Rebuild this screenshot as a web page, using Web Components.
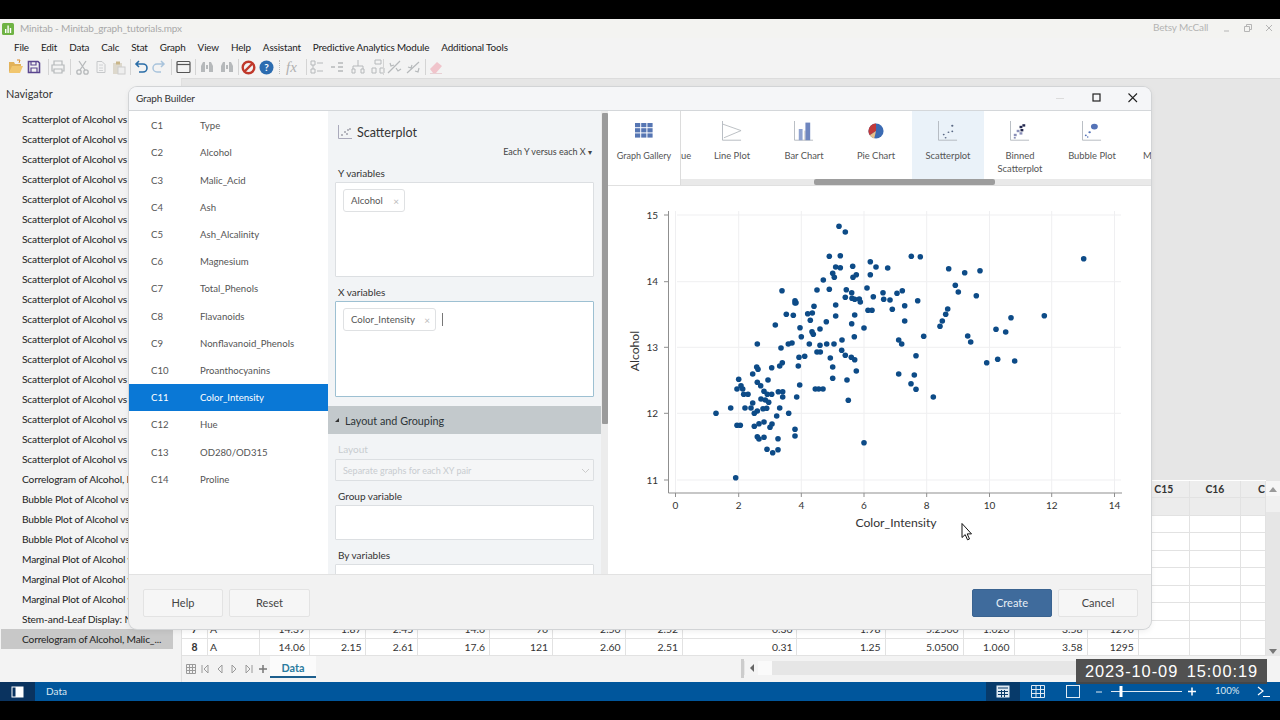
<!DOCTYPE html>
<html><head><meta charset="utf-8"><title>Minitab</title>
<style>
html,body{margin:0;padding:0;background:#000;height:720px;overflow:hidden;font-family:Lato,"Open Sans",sans-serif}
#app{position:relative;width:1280px;height:720px;display:flex;flex-direction:column;padding-top:19px;box-sizing:border-box}
#main{display:flex;height:604px}
#work{flex:1;display:flex;flex-direction:column;min-width:0}
.fill{flex:1;background:#e6e6e6;border-top:1px solid #dcdcdc}
</style></head><body>
<div id="app">
<mt-title></mt-title><mt-menu></mt-menu><mt-toolbar></mt-toolbar>
<div id="main"><mt-navigator></mt-navigator><div id="work"><div class="fill"></div><mt-sheet></mt-sheet><mt-tabbar></mt-tabbar></div></div>
<mt-status></mt-status>
<mt-dialog></mt-dialog>
<mt-stamp>2023-10-09 15:00:19</mt-stamp>
</div>
<template id="dialog-tpl">
<style>
:host{position:absolute;left:129px;top:87px;width:1022px;height:542px;display:flex;flex-direction:column;background:#f2f2f2;border-radius:8px;box-shadow:0 0 0 1px #d2d4d6,0 2px 6px rgba(0,0,0,.08);overflow:hidden;font-size:10px;color:#444}
.bar{height:24px;flex:none;display:flex;align-items:center;padding:0 0 2px 7px;background:#f5f6f8;border-bottom:1px solid #d4d7da;font-size:10px;letter-spacing:-.15px;color:#333;position:relative;box-sizing:border-box}
.bar svg{position:absolute;top:5px}
.body{flex:1;display:flex;min-height:0}
.foot{height:55px;flex:none;border-top:1px solid #e2e2e2;display:flex;align-items:center;padding:1px 13px 0 14px;gap:6px;box-sizing:border-box}
.sp{flex:1}
.mid{width:280px;flex:none;position:relative;overflow:hidden;background:#f2f4f6;display:flex}
.col{width:273px;flex:none;padding:10px 0 0;overflow:hidden;box-sizing:border-box}
.sb{width:7px;background:#ececec;position:relative;flex:none}
.sb i{position:absolute;left:1px;right:0;top:2px;height:311px;background:#9b9b9b;border-radius:1px}
.head{height:22px;display:flex;align-items:center;gap:5px;padding-left:10px;font-size:12.5px;color:#333}
.sub{height:14px;margin:2px 0 6px;text-align:right;padding-right:9px;font-size:9px;line-height:14px;color:#444;white-space:nowrap}
.sub span{font-size:8px}
.sec{height:28px;margin:9px 0 7px;background:#c3c9cc;display:flex;align-items:center;padding-left:7px;gap:6px;font-size:10.8px;color:#2d3438}
.sec i{width:0;height:0;border-left:4px solid transparent;border-bottom:4px solid #333}
.right{flex:1;min-width:0;background:#fff;display:flex;flex-direction:column}
</style>
<div class="bar">Graph Builder
<svg style="left:925px" width="12" height="12"><path d="M2 6.5H10" stroke="#dcdcdc"/></svg>
<svg style="left:962px" width="12" height="12"><rect x="2" y="2" width="7" height="7" fill="none" stroke="#222" stroke-width="1.2"/></svg>
<svg style="left:998px" width="12" height="12"><path d="M1.5 1.5l8.500 8.500M10 1.500l-8.500 8.500" stroke="#222" stroke-width="1.100"/></svg>
</div>
<div class="body">
<mt-varlist></mt-varlist>
<div class="mid"><div class="col">
<div class="head"><svg width="14" height="14" viewBox="0 0 14 14"><path d="M.5 0V13.500H14" fill="none" stroke="#aab" /><g fill="#667"><circle cx="4" cy="10" r=".8"/><circle cx="7" cy="7" r=".8"/><circle cx="9" cy="9" r=".8"/><circle cx="12" cy="4" r=".8"/><circle cx="10" cy="5" r=".8"/></g></svg>Scatterplot</div>
<div class="sub">Each Y versus each X <span>▾</span></div>
<mt-field label="Y variables" h="95"><mt-chip w="62">Alcohol</mt-chip></mt-field>
<mt-field label="X variables" h="96" focus caret><mt-chip w="93">Color_Intensity</mt-chip></mt-field>
<div class="sec"><i></i>Layout and Grouping</div>
<mt-field label="Layout" h="22" disabled select>Separate graphs for each XY pair</mt-field>
<mt-field label="Group variable" h="35"></mt-field>
<mt-field label="By variables" h="35"></mt-field>
</div><div class="sb"><i></i></div></div>
<div class="right"><mt-gallery></mt-gallery><mt-chart></mt-chart></div>
</div>
<div class="foot"><mt-button>Help</mt-button><mt-button>Reset</mt-button><span class="sp"></span><mt-button primary>Create</mt-button><mt-button>Cancel</mt-button></div>
</template>
<script>
const F='Lato,"Open Sans",sans-serif';
function def(name,render){customElements.define(name,class extends HTMLElement{connectedCallback(){if(!this.shadowRoot){this.attachShadow({mode:'open'}).innerHTML=render(this);}}});}

def('mt-title',()=>`<style>:host{display:flex;height:19px;background:#f3f3f1;align-items:center;font-size:10px;letter-spacing:-.15px;color:#a9a9a9;position:relative}
svg{flex:none}.t{margin-left:6px;margin-top:-1px}.u{position:absolute;left:1153px;top:2px;color:#b3b3b3}.w{position:absolute;top:4px}</style>
<svg style="margin-left:2px" width="12" height="12"><rect width="12" height="12" rx="1.500" fill="#6fb344"/><path d="M3 10V6h1.400v4zM5.400 10V2.500h1.400V10zM7.800 10V5h1.400v5z" fill="#fff"/></svg>
<span class="t">Minitab - Minitab_graph_tutorials.mpx</span><span class="u">Betsy McCall</span>
<svg class="w" style="left:1222px" width="10" height="10"><path d="M2 8H7" stroke="#b5b5b5"/></svg>
<svg class="w" style="left:1243px" width="10" height="10"><path d="M1.500 3.500h5v5h-5zM3.500 3.500v-2h5v5h-2" fill="none" stroke="#b5b5b5"/></svg>
<svg class="w" style="left:1264px" width="10" height="10"><path d="M2 2l6 6M8 2l-6 6" stroke="#b5b5b5"/></svg>`);

def('mt-menu',()=>{const m=['File','Edit','Data','Calc','Stat','Graph','View','Help','Assistant','Predictive Analytics Module','Additional Tools'];
return `<style>:host{display:flex;height:18px;background:#f3f3f3;align-items:center;padding:0 0 1px 14px;box-sizing:border-box;gap:12px;font-size:9.900px;letter-spacing:-.15px;color:#222;white-space:nowrap}</style>`+m.map(x=>`<span>${x}</span>`).join('');});

def('mt-toolbar',()=>{
const g='#b6b9bb';
const bin=`<svg width="16" height="16"><path d="M2 13V7l2-4h2v10zM10 13V3h2l2 4v6zM7 6h2v4H7z" fill="${g}"/></svg>`;
const it=[
[16,`<svg width="16" height="16"><path d="M1 5V3h5l1 2h6v2H5L1 14z" fill="#e2b25a"/><path d="M1 14l3-7h11l-3 7z" fill="#f1c66e"/><path d="M9 1h3l-1 3" stroke="#d98a2c" fill="none"/></svg>`],
[34,`<svg width="14" height="14"><path d="M1.500 1.500h9.500l1.500 1.500v9.500h-11z" fill="none" stroke="#5a468f" stroke-width="1.600"/><path d="M4 2v3h5V2M4 12V8h6v4" fill="none" stroke="#5a468f" stroke-width="1.200"/></svg>`],
[48,'s'],
[58,`<svg width="16" height="16"><path d="M4 6V2h8v4M4 12H2V6h12v6h-2M4 10h8v4H4z" fill="none" stroke="${g}" stroke-width="1.200"/></svg>`],
[70,'s'],
[82,`<svg width="15" height="15"><circle cx="4" cy="12" r="2.200" fill="none" stroke="${g}" stroke-width="1.300"/><circle cx="11" cy="12" r="2.200" fill="none" stroke="${g}" stroke-width="1.300"/><path d="M5 10L11 1M10 10L4 1" stroke="${g}" stroke-width="1.300"/></svg>`],
[101,`<svg width="15" height="15"><path d="M3 1.500h5l3 3v8H3z" fill="none" stroke="#c6c8ca"/><path d="M5 5h4M5 8h4M5 10.500h4" stroke="#d0d2d4"/></svg>`],
[118,`<svg width="15" height="15"><rect x="2" y="3" width="9" height="11" fill="#ddd8cc"/><rect x="5" y="1.500" width="4" height="3" fill="#c9b689"/><rect x="7" y="7" width="7" height="7" fill="#eee" stroke="#ccc"/></svg>`],
[130,'s'],
[141,`<svg width="16" height="16"><path d="M3 5h7a4 4 0 010 8H6M6 2L3 5l3 3" fill="none" stroke="#2b6ea8" stroke-width="1.600"/></svg>`],
[159,`<svg width="16" height="16"><path d="M13 5H6a4 4 0 000 8h4M10 2l3 3-3 3" fill="none" stroke="#a9c4dc" stroke-width="1.500"/></svg>`],
[171,'s'],
[183,`<svg width="15" height="14"><rect x="1" y="1.500" width="13" height="11" rx="1" fill="none" stroke="#555" stroke-width="1.200"/><path d="M1 4.500h13" stroke="#555" stroke-width="1.200"/></svg>`],
[195,'s'],
[207,bin],[227,bin],
[238,'s'],
[248,`<svg width="15" height="15"><circle cx="7.500" cy="7.500" r="5.800" fill="none" stroke="#c0392b" stroke-width="2.400"/><path d="M3.500 11.500l8-8" stroke="#c0392b" stroke-width="2.400"/></svg>`],
[266,`<svg width="15" height="15"><circle cx="7.500" cy="7.500" r="7" fill="#2b6cb0"/><text x="7.500" y="11" font-family="${F}" font-weight="700" font-size="10" fill="#fff" text-anchor="middle">?</text></svg>`],
[280,'d'],
[294,`<svg width="18" height="18"><text x="1" y="14" font-family="Liberation Serif,serif" font-style="italic" font-size="15" fill="#b0b0b0">fx</text></svg>`],
[306,'s'],
[317,`<svg width="14" height="16"><path d="M1 2h4v4H1zM1 10h4v4H1zM7 4h6M7 12h6M3 6v4" fill="none" stroke="${g}"/></svg>`],
[337,`<svg width="14" height="16"><path d="M1 8h4M8 4h5M8 8h5M8 12h5" fill="none" stroke="${g}" stroke-width="1.300"/></svg>`],
[358,`<svg width="14" height="16"><path d="M7 1v6M2 7h10M2 7v3M12 7v3" fill="none" stroke="${g}"/><path d="M1 10h3v4H1zM10 10h3v4h-3z" fill="none" stroke="${g}"/></svg>`],
[378,`<svg width="14" height="16"><path d="M4 1h6v4H4zM1 9h4v5H1zM9 9h4v5H9z" fill="none" stroke="${g}"/></svg>`],
[383,'s0'],
[394,`<svg width="16" height="16"><path d="M2 14L14 2M4 4l1 3 3-1M10 9l2 3 3-2" fill="none" stroke="${g}" stroke-width="1.200"/></svg>`],
[413,`<svg width="16" height="16"><path d="M2 14L14 3M3 8l3 1 1-3M10 12l3 1 1-4" fill="none" stroke="${g}" stroke-width="1.200"/></svg>`],
[425,'s'],
[436,`<svg width="16" height="16"><path d="M2 10l7-7 5 4-6 7H5z" fill="#f0c4cb"/><path d="M2 14.500h12" stroke="#e8d0d4"/></svg>`]
];
let x=0,o='';
for(const [c,s] of it){let w,h;
 if(s[0]==='s'){w=1;h=`<i></i>`}else if(s==='d'){w=2;h=`<b></b>`}else{w=+s.match(/width="(\d+)"/)[1];h=s}
 const l=Math.round(c-w/2);o+=`<span style="margin-left:${l-x}px;width:${w}px">${h}</span>`;x=l+w;}
return `<style>:host{display:flex;height:22px;background:#f3f3f3;align-items:center}span{display:flex;align-items:center;justify-content:center;flex:none}i{display:block;width:1px;height:16px;background:#d4d4d4}b{display:block;width:1px;height:14px;border-left:1px dotted #bbb}svg{display:block}</style>`+o;});

def('mt-navigator',()=>{
const r=[];
for(let i=0;i<18;i++)r.push('Scatterplot of Alcohol vs');
r.push('Correlogram of Alcohol, I','Bubble Plot of Alcohol vs','Bubble Plot of Alcohol vs','Bubble Plot of Alcohol vs','Marginal Plot of Alcohol v','Marginal Plot of Alcohol v','Marginal Plot of Alcohol v','Stem-and-Leaf Display: N');
return `<style>:host{display:block;width:182px;flex:none;background:#f3f3f3;border-right:1px solid #e0e0e0;box-sizing:border-box;color:#222;font-size:10.2px;letter-spacing:-.15px;overflow:hidden}
.h{height:31px;padding-left:6px;display:flex;align-items:center;font-size:10.900px;letter-spacing:0;color:#333}
.r{height:20px;line-height:20px;padding-left:22px;white-space:nowrap;overflow:hidden}
.s{background:#c8c8c8;margin-left:1px;padding-left:21px;width:172px;box-sizing:border-box}</style>
<div class="h">Navigator</div>`+r.map(x=>`<div class="r">${x}</div>`).join('')+`<div class="r s">Correlogram of Alcohol, Malic_...</div>`;});

def('mt-sheet',()=>{
const W=[26,51.6,50.4,56.5,51.9,71.6,63,72.7,57.3,114.5,88.2,78,51,73,51.100,51.200,51,25];
const blank=Array(18).fill('');
const rows=[blank,blank,blank,blank,blank,blank,
['7','A','14.39','1.87','2.45','14.6','96','2.50','2.52','0.30','1.98','5.2500','1.020','3.58','1290','','',''],
['8','A','14.06','2.15','2.61','17.6','121','2.60','2.51','0.31','1.25','5.0500','1.060','3.58','1295','','','']];
let c='';
for(let i=0;i<18;i++){const t=i==15?'C15':i==16?'C16':i==17?'C':'';c+=`<div class="c hd ${i==17?'lc':''}">${t}</div>`;}
for(let i=0;i<18;i++)c+=`<div class="c nm"></div>`;
for(const d of rows){for(let i=0;i<18;i++){c+=`<div class="c ${i==0?'rh':i==1?'tx':'nu'}">${d[i]}</div>`;}}
return `<style>:host{display:flex;height:176px;flex:none;background:#fff;border-left:1px solid #e0e0e0;margin-left:-1px;font-size:10.4px;color:#333;overflow:hidden;box-sizing:border-box}
.g{display:grid;grid-template-columns:${W.map(x=>x+'px').join(' ')};grid-template-rows:17px 17.500px repeat(8,17.600px);flex:none;width:1084px;padding-top:1px}
.c{border-right:1.500px solid #e2e2e2;border-bottom:1.500px solid #e2e2e2;box-sizing:border-box;padding:0 4px;line-height:17px;overflow:hidden;white-space:nowrap}
.hd{background:#ededed;font-weight:700;text-align:center;color:#333}.lc{text-align:right;padding:0}.nm{background:#ececec}.nu{text-align:right}.tx{text-align:left;padding-left:2px}.rh{text-align:center;font-weight:700;padding:0}
.sb{width:14px;flex:none;background:#e6e6e6;display:flex;flex-direction:column;justify-content:space-between;align-items:center;padding:1px 0 0}
.up{width:14px;height:31px;background:linear-gradient(#f6f6f6 50%,#f0f0f0 50%);display:flex;justify-content:center;padding-top:6px;box-sizing:border-box}
.up i{width:0;height:0;border:4px solid transparent;border-top:0;border-bottom:5px solid #999}
.dn{width:0;height:0;border:4px solid transparent;border-bottom:0;border-top:5px solid #777;margin-bottom:2px}</style>
<div class="g">${c}</div><div class="sb"><div class="up"><i></i></div><div class="dn"></div></div>`;});

def('mt-tabbar',()=>{const g='#9a9a9a';
const ic=[[192,`<svg width="10" height="10"><path d="M.5.500h9v9h-9zM.5 3.500h9M.5 6.500h9M3.500.500v9M6.500.500v9" fill="none" stroke="${g}"/></svg>`],
[206,`<svg width="8" height="10"><path d="M1 1v8M7 1L3 5l4 4z" fill="none" stroke="${g}"/></svg>`],
[221,`<svg width="6" height="10"><path d="M5 1L1 5l4 4z" fill="none" stroke="${g}"/></svg>`],
[235,`<svg width="6" height="10"><path d="M1 1l4 4-4 4z" fill="none" stroke="${g}"/></svg>`],
[250,`<svg width="8" height="10"><path d="M7 1v8M1 1l4 4-4 4z" fill="none" stroke="${g}"/></svg>`],
[264,`<svg width="10" height="10"><path d="M5 1v8M1 5h8" stroke="#777" stroke-width="1.500"/></svg>`]];
let x=183,o='';for(const [c,s] of ic){const w=+s.match(/width="(\d+)"/)[1];const l=c-w/2;o+=`<span style="margin-left:${l-x}px;width:${w}px">${s}</span>`;x=l+w;}
return `<style>:host{display:flex;height:26px;flex:none;background:#f3f3f3;border-left:1px solid #e0e0e0;margin-left:-1px;align-items:center;box-sizing:border-box;position:relative}
span{display:flex;flex:none}svg{display:block}
.tab{margin-left:2px;width:46px;height:22px;align-self:flex-start;box-sizing:border-box;border-bottom:2px solid #1d5f8e;background:#fbfbfb;color:#2a7a9e;font-weight:700;font-size:10.800px;text-align:center;line-height:24px;flex:none}
.sc{position:absolute;left:559px;top:5px;width:335px;height:14px;display:flex;align-items:center;background:#e6e6e6}
.gr{width:3px;height:19px;background:#ccc;flex:none}.ar{width:13px;height:14px;background:#f4f4f4;margin-left:1px;display:flex;align-items:center;justify-content:center}.ar i{border:4px solid transparent;border-left:0;border-right:4px solid #666}.th{width:14px;height:14px;background:#fafafa}</style>
${o}<div class="tab">Data</div><div class="sc"><div class="gr"></div><div class="ar"><i></i></div><div class="th"></div></div>`;});

def('mt-status',()=>`<style>:host{display:flex;height:19px;flex:none;background:#00569c;align-items:center;color:#dbe8f3;font-size:10px;position:relative}
.l{width:35px;height:19px;background:#0a335f;display:flex;align-items:center;justify-content:center}.t{margin:-1px 0 0 11px}
.a{position:absolute;top:0;height:19px;display:flex;align-items:center}svg{display:block}</style>
<div class="l"><svg width="13" height="12"><rect x=".5" y=".5" width="12" height="11" fill="#fff"/><rect x="1.500" y="1.500" width="3" height="9" fill="#0a335f"/></svg></div><span class="t">Data</span>
<div class="a" style="left:986px;width:34px;background:#073a6a;justify-content:center"><svg width="14" height="13"><path d="M.5.500h13v12H.5z" fill="#dfe9f2"/><path d="M2 3h10M2 6.500h10M2 9.500h10M5.500 5v7M8.500 5v7" stroke="#0a3a68"/></svg></div>
<div class="a" style="left:1031px"><svg width="14" height="13"><path d="M.5.500h13v12H.5zM.5 4.500h13M.5 8.500h13M5 .5v12M9.500 .5v12" fill="none" stroke="#dfe9f2"/></svg></div>
<div class="a" style="left:1066px"><svg width="14" height="13"><rect x=".5" y=".5" width="13" height="12" fill="none" stroke="#dfe9f2"/></svg></div>
<div class="a" style="left:1096px"><svg width="90" height="19"><path d="M0 10H6M15 9.500H86" stroke="#dfe9f2"/><path d="M25 4v11" stroke="#fff" stroke-width="3"/></svg></div>
<div class="a" style="left:1188px"><svg width="9" height="9"><path d="M0 4.500h8M4 .5v8" stroke="#fff" stroke-width="1.500"/></svg></div>
<div class="a" style="left:1215px;font-size:9.600px;margin-top:-1px">100%</div>
<div class="a" style="left:1257px"><svg width="13" height="13"><path d="M1 2l5 4-5 4M6 11.500h7" fill="none" stroke="#fff" stroke-width="1.200"/></svg></div>`);

def('mt-stamp',()=>`<style>:host{position:absolute;left:1076px;top:659px;width:191px;height:25px;background:rgba(70,70,70,.94);color:#fff;font:16.400px "Liberation Sans",sans-serif;letter-spacing:.95px;word-spacing:3px;display:flex;align-items:center;justify-content:center;white-space:pre}</style><slot></slot>`);

customElements.define('mt-dialog',class extends HTMLElement{connectedCallback(){const s=this.attachShadow({mode:'open'});s.appendChild(document.getElementById('dialog-tpl').content.cloneNode(true));}});

def('mt-varlist',()=>{const n=['Type','Alcohol','Malic_Acid','Ash','Ash_Alcalinity','Magnesium','Total_Phenols','Flavanoids','Nonflavanoid_Phenols','Proanthocyanins','Color_Intensity','Hue','OD280/OD315','Proline'];
return `<style>:host{display:block;width:199px;flex:none;background:#fff;padding-top:1.200px;box-sizing:border-box;font-size:9.600px;color:#555}
.r{height:27.200px;display:flex;align-items:center;padding-left:22px}.c{width:49px}.s{background:#0a78d6;color:#fff}</style>`+n.map((x,i)=>`<div class="r ${i==10?'s':''}"><span class="c">C${i+1}</span><span>${x}</span></div>`).join('');});

def('mt-field',el=>{const dis=el.hasAttribute('disabled'),sel=el.hasAttribute('select'),foc=el.hasAttribute('focus');
return `<style>:host{display:block;font-size:10px;color:${dis?'#c8ccd0':'#333'}}
.l{height:16px;line-height:16px;padding-left:10px;margin-bottom:${sel?2:1}px}
.b{margin:0 0 7px 7px;width:259px;height:${el.getAttribute('h')}px;box-sizing:border-box;background:${dis?'#f5f6f7':'#fff'};border:1px solid ${foc?'#9dc0d2':'#dcdfe2'};border-radius:1px;padding:${sel?'0 0 0 7px':'6px 7px'};display:flex;align-items:${sel?'center':'flex-start'};gap:6px;position:relative;font-size:9px}
.k{width:1px;height:13px;background:#777;margin-top:5px}
svg{position:absolute;right:3px;top:8px}</style>
<div class="l">${el.getAttribute('label')}</div><div class="b"><slot></slot>${el.hasAttribute('caret')?'<i class="k"></i>':''}${sel?'<svg width="9" height="6"><path d="M1 1l3.500 3.500L8 1" fill="none" stroke="#ccc"/></svg>':''}</div>`;});

def('mt-chip',el=>`<style>:host{display:flex;width:${el.getAttribute('w')}px;height:23px;box-sizing:border-box;border:1px solid #dfe1e3;border-radius:3px;background:#fff;align-items:center;padding:0 5px 0 7px;justify-content:space-between;font-size:9.600px;color:#555;flex:none}
i{font-style:normal;color:#bbb;font-size:10px}</style><slot></slot><i>×</i>`);

def('mt-button',el=>{const p=el.hasAttribute('primary');const w=el.textContent=='Reset'?81:80;
return `<style>:host{display:flex;width:${w}px;height:28px;box-sizing:border-box;align-items:center;justify-content:center;border-radius:2px;font-size:11px;${p?'background:#3f6b9c;color:#e8eff6;border:1px solid #3a6390':'background:#f6f6f6;color:#444;border:1px solid #e3e3e3'}}</style><slot></slot>`;});

def('mt-gallery',()=>{
const sv=b=>`<svg width="20" height="20" viewBox="0 0 21 25" preserveAspectRatio="none">${b}</svg>`;
const ax=`<path d="M.5 0V24H20" fill="none" stroke="#aeb4ba"/>`;
const it=[
['Line Plot',sv(`${ax}<path d="M1 4L20 12L2 21" fill="none" stroke="#b3b8bd"/>`)],
['Bar Chart',sv(`${ax}<rect x="5" y="10" width="4" height="14" fill="#8fa2cf"/><rect x="11" y="12" width="1" height="12" fill="#bbb"/><rect x="12" y="2" width="5" height="22" fill="#6f86bf"/>`)],
['Pie Chart',`<svg width="16" height="16" viewBox="0 0 18 18" style="margin-top:2px"><circle cx="9" cy="9" r="8.500" fill="#3b6bb3"/><path d="M9 9V.5A8.500 8.500 0 00.5 9 8.500 8.500 0 002 13.800z" fill="#c23a3a"/><path d="M9 9L2 13.800A8.500 8.500 0 007 17.300z" fill="#e8c08a"/></svg>`],
['Scatterplot',sv(`${ax}<g fill="#5b6a85"><circle cx="6" cy="17" r="1"/><circle cx="8" cy="21" r="1"/><circle cx="11" cy="14" r="1"/><circle cx="15" cy="13" r="1"/><circle cx="15" cy="6" r="1.200"/></g>`)],
['Binned<br>Scatterplot',sv(`${ax}<g fill="#8a8fb8"><rect x="4" y="16" width="3" height="3"/><rect x="7" y="11" width="3" height="3"/><rect x="10" y="14" width="3" height="3"/><rect x="4" y="20" width="2" height="2"/></g><g fill="#23284f"><rect x="10" y="6" width="3" height="3"/><rect x="13" y="4" width="3" height="3"/><rect x="11" y="10" width="3" height="3"/></g>`)],
['Bubble Plot',sv(`${ax}<g fill="#5573b7"><circle cx="13" cy="7" r="3.600"/><circle cx="8" cy="14" r="1.300"/><circle cx="4" cy="18" r="1"/><circle cx="6" cy="20" r=".8"/></g>`)]];
return `<style>:host{display:flex;height:75px;flex:none;border-bottom:1px solid #e0e0e0;box-sizing:border-box;font-size:9.400px;color:#555;position:relative;background:#fff}
.gg{width:73px;flex:none;border-right:1px solid #dcdcdc;box-sizing:border-box;text-align:center;padding-top:12px;font-size:9px}
.strip{flex:1;display:flex;position:relative;overflow:hidden;min-width:0}
.i{width:72px;flex:none;height:69px;text-align:center;padding-top:10px;box-sizing:border-box;line-height:13px}
.i svg,.gg svg{display:block;margin:0 auto}.ic{height:28px;display:flex;justify-content:center}
.on{background:#eaf2f9}
.sc{position:absolute;left:0;right:0;bottom:0;height:6px;background:#e9e9e9}.sc i{position:absolute;left:133px;width:181px;top:0;bottom:0;background:#9d9d9d;border-radius:2px}
.e{width:15px;flex:none;padding-top:38px;line-height:13px}.m{flex:none;padding:38px 0 0 15px;line-height:13px}</style>
<div class="gg"><svg width="18" height="15"><g fill="#5676b3">${[0,1,2].map(r=>[0,1,2].map(c=>`<rect x="${c*6.200}" y="${r*5.200}" width="5.200" height="4.200"/>`).join('')).join('')}</g></svg><div style="margin-top:12px">Graph Gallery</div></div>
<div class="strip"><div class="e">ue</div>${it.map(([l,s])=>`<div class="i ${l=='Scatterplot'?'on':''}"><div class="ic">${s}</div><div class="lb">${l}</div></div>`).join('')}<div class="m">M</div><div class="sc"><i></i></div></div>`;});

def('mt-chart',()=>{
const z5=[[537,64],[556,81],[508,154],[541,152],[631,170],[648,186],[683,189],[578,184],[527,186],[541,188],[518,205],[523,217],[579,217],[589,209],[631,209],[490,225],[471,255],[508,253],[366,257],[559,254],[621,249],[575,263],[669,263],[556,277],[576,280],[584,283],[598,282],[601,291],[640,275],[671,283],[405,287],[408,293],[405,294],[462,304],[527,300],[379,328],[400,331],[443,326],[457,324],[624,316],[636,316],[584,330],[527,333],[451,346],[499,350],[346,360],[575,356],[420,368],[480,372],[612,369],[456,380],[460,388],[424,395],[583,395],[546,405],[292,417],[385,417],[396,414],[448,417],[480,421],[500,417],[522,417],[363,429],[471,441],[481,441],[545,436],[556,451],[574,457],[584,464],[417,457],[434,454],[511,459]];
const z6=[[290,21],[294,28],[367,8],[359,18],[335,23],[415,18],[518,21],[589,33],[518,55],[561,60],[278,42],[236,58],[324,60],[292,67],[302,77],[419,75],[243,77],[231,87],[248,87],[466,87],[476,87],[489,87],[312,94],[355,95],[368,95],[251,103],[264,103],[322,103],[335,103],[410,111],[368,111],[303,117],[316,120],[326,127],[565,121],[278,129],[212,144],[255,144],[273,144],[309,146],[320,145],[359,144],[292,153],[283,160],[168,160],[386,160],[350,168],[231,196],[241,196],[283,199],[297,191],[312,186],[336,192],[330,202],[405,208],[405,228],[292,230],[297,237],[312,232],[354,236],[321,268],[354,269],[338,278],[612,248],[227,353]];
const z7=[[64,154],[91,155],[176,191],[224,203],[270,197],[581,161],[196,241],[205,261],[259,272],[37,257],[21,265],[0,285],[44,302],[83,287],[7,313],[173,312],[167,328],[157,348],[150,364],[44,348],[363,338],[463,332],[318,373],[347,381],[233,393],[242,411],[26,405],[35,417],[101,394],[78,452],[26,507],[73,510],[63,536],[78,553],[130,576],[290,473],[323,463],[374,468]];
const P=[...z5.map(([x,y])=>[660+x/3,205+y/3]),...z6.map(([x,y])=>[660+x/3,360+y/3]),...z7.map(([x,y])=>[890+x/3,205+y/3])];
const xs=[675.5,738.7,801.3,864,926.7,989.5,1051.7,1114.5],ys=[215,281.7,347.3,413.3,480];
const num=`font-family="${F}" font-size="10" fill="#333"`;
let s='';
xs.forEach(x=>s+=`<path d="M${x} 211V493" stroke="#efeff1"/>`);
ys.forEach(y=>s+=`<path d="M677 ${y}H1121" stroke="#efeff1"/>`);
s+=`<path d="M668.500 211V493H1122" fill="none" stroke="#8f8f8f"/>`;
xs.forEach((x,i)=>{s+=`<path d="M${x} 493v4" stroke="#8f8f8f"/><text x="${x}" y="509" text-anchor="middle" ${num}>${i*2}</text>`;});
ys.forEach((y,i)=>{s+=`<path d="M664 ${y}h4" stroke="#8f8f8f"/><text x="658" y="${y+3.500}" text-anchor="end" ${num}>${15-i}</text>`;});
s+=`<g fill="#0d4b87">${P.map(([x,y])=>`<circle cx="${x.toFixed(1)}" cy="${y.toFixed(1)}" r="2.800"/>`).join('')}</g>`;
s+=`<text x="896" y="527" text-anchor="middle" font-family="${F}" font-size="12.200" fill="#333">Color_Intensity</text>`;
s+=`<text transform="translate(639 351) rotate(-90)" text-anchor="middle" font-family="${F}" font-size="12.200" fill="#333">Alcohol</text>`;
s+=`<path d="M962 523.500V537.500L965.200 534.600L967.500 539.800L969.500 539L967.200 533.900H971.500Z" fill="#fff" stroke="#111" stroke-width="1"/>`;
return `<style>:host{display:block;flex:1;min-height:0;background:#fff}svg{display:block}</style><svg width="543" height="388" viewBox="608 186 543 388">${s}</svg>`;});
</script>
</body></html>
